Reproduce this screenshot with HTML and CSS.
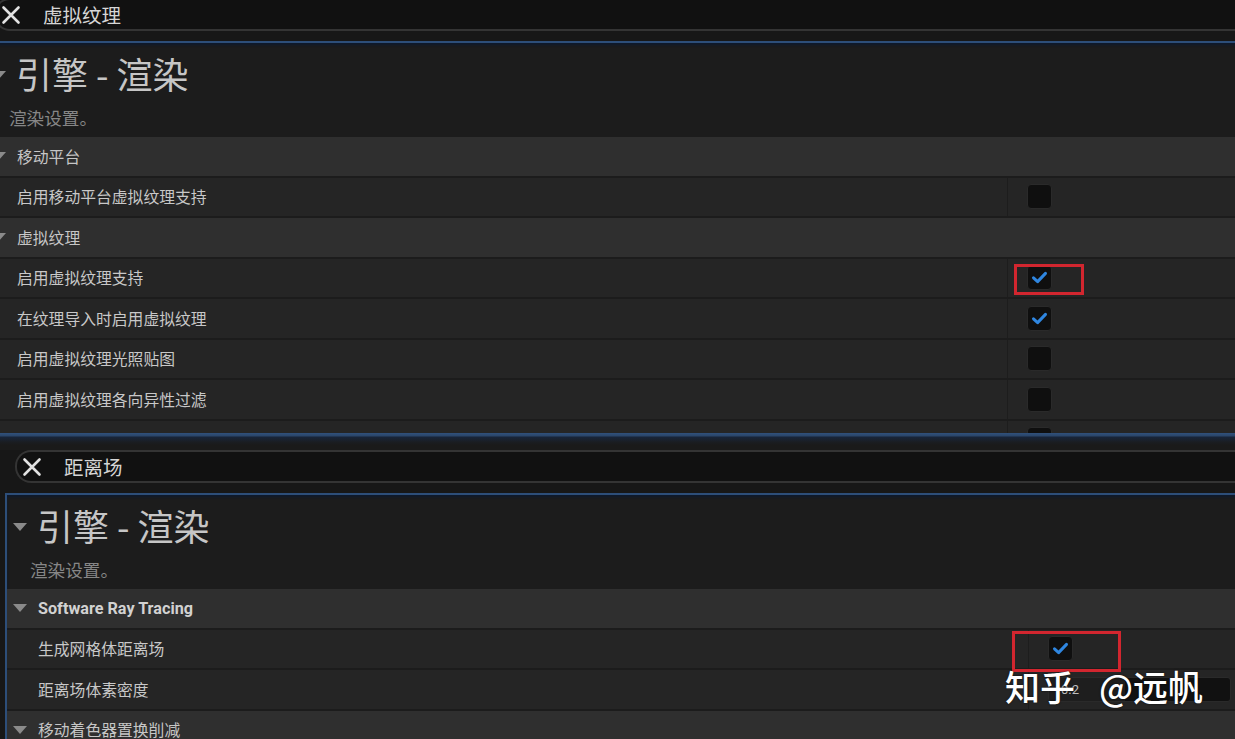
FILE: index.html
```html
<!DOCTYPE html>
<html lang="zh-CN">
<head>
<meta charset="utf-8">
<title>引擎 - 渲染</title>
<link rel="stylesheet" href="styles.css">
</head>
<body>
<div class="stage">
  <div class="clip clip-top">
    <div class="shot shot-top">
      <div class="topline"></div>
      <div class="search">
        <svg class="xicon" width="20" height="20" viewBox="0 0 20 20"><path d="M2.5 2.5 L17.5 17.5 M17.5 2.5 L2.5 17.5" stroke="#e2e2e2" stroke-width="2.6" stroke-linecap="round" fill="none"/></svg>
        <span class="search-text">虚拟纹理</span>
      </div>
      <div class="panel">
        <div class="title"><span class="tri big"></span><span>引擎 - 渲染</span></div>
        <div class="desc">渲染设置。</div>
        <div class="rows">
          <div class="row cat"><span class="tri"></span><span class="cat-label">移动平台</span></div>
          <div class="row"><div class="name">启用移动平台虚拟纹理支持</div><div class="value"><span class="cb"></span></div></div>
          <div class="row cat"><span class="tri"></span><span class="cat-label">虚拟纹理</span></div>
          <div class="row"><div class="name">启用虚拟纹理支持</div><div class="value"><span class="cb"><svg width="25" height="25" viewBox="0 0 25 25"><path d="M6.5 12.8 L10.6 16.6 L18.5 8.4" stroke="#2f86e0" stroke-width="3" stroke-linecap="round" stroke-linejoin="round" fill="none"/></svg></span></div></div>
          <div class="row"><div class="name">在纹理导入时启用虚拟纹理</div><div class="value"><span class="cb"><svg width="25" height="25" viewBox="0 0 25 25"><path d="M6.5 12.8 L10.6 16.6 L18.5 8.4" stroke="#2f86e0" stroke-width="3" stroke-linecap="round" stroke-linejoin="round" fill="none"/></svg></span></div></div>
          <div class="row"><div class="name">启用虚拟纹理光照贴图</div><div class="value"><span class="cb"></span></div></div>
          <div class="row"><div class="name">启用虚拟纹理各向异性过滤</div><div class="value"><span class="cb"></span></div></div>
          <div class="row"><div class="name"></div><div class="value"><span class="cb"></span></div></div>
        </div>
      </div>
    </div>
  </div>
  <div class="clip clip-bottom">
    <div class="shot">
      <div class="topline"></div>
      <div class="search">
        <svg class="xicon" width="20" height="20" viewBox="0 0 20 20"><path d="M2.5 2.5 L17.5 17.5 M17.5 2.5 L2.5 17.5" stroke="#e2e2e2" stroke-width="2.6" stroke-linecap="round" fill="none"/></svg>
        <span class="search-text">距离场</span>
      </div>
      <div class="panel">
        <div class="title"><span class="tri big"></span><span>引擎 - 渲染</span></div>
        <div class="desc">渲染设置。</div>
        <div class="rows">
          <div class="row cat"><span class="tri"></span><span class="cat-label bold">Software Ray Tracing</span></div>
          <div class="row"><div class="name">生成网格体距离场</div><div class="value"><span class="cb"><svg width="25" height="25" viewBox="0 0 25 25"><path d="M6.5 12.8 L10.6 16.6 L18.5 8.4" stroke="#2f86e0" stroke-width="3" stroke-linecap="round" stroke-linejoin="round" fill="none"/></svg></span></div></div>
          <div class="row"><div class="name">距离场体素密度</div><div class="value"><div class="num"><span class="num-a">0.2</span><span class="num-b"></span></div></div></div>
          <div class="row cat"><span class="tri"></span><span class="cat-label">移动着色器置换削减</span></div>
        </div>
      </div>
    </div>
  </div>
  <div class="mark mark-top"></div>
  <div class="mark mark-bottom"></div>
  <div class="watermark">知乎<span class="wm-at">@远帆</span></div>
</div>
</body>
</html>
```

FILE: styles.css
```css
* { box-sizing: border-box; }
html, body { margin: 0; padding: 0; }
body {
  width: 1235px;
  height: 739px;
  overflow: hidden;
  background: #1a1a1a;
  font-family: Roboto, "Noto Sans CJK SC", sans-serif;
  color: #c8c8c8;
}
.stage { position: relative; width: 1235px; height: 739px; }
.clip { overflow: hidden; width: 1235px; }
.clip-top { height: 433px; }
.clip-bottom { height: 306px; }
.shot {
  width: 1400px;
  background: #171717;
  display: flex;
  flex-direction: column;
}
.shot-top { margin: -19px 0 0 -21px; }
.topline {
  height: 17px;
  background: linear-gradient(#30517c 0, #2a4569 3px, #18253a 4px, #1a1d22 9px, #1a1a1a 12px);
}
.search {
  margin-left: 15px;
  height: 33px;
  border: 2px solid #343434;
  border-right: none;
  border-radius: 16px 0 0 16px;
  background: #111111;
  display: flex;
  align-items: center;
}
.xicon { margin-left: 5px; flex: none; }
.search-text {
  margin-left: 22px;
  font-size: 19.5px;
  color: #d6d6d6;
  font-family: "Noto Sans CJK SC", sans-serif;
}
.panel {
  margin: 10px 0 0 5px;
  border-top: 2px solid #2d4e79;
  border-left: 2px solid #2d4e79;
  background: #1c1c1c;
  box-shadow: inset 0 2px 3px rgba(10, 25, 50, 0.8);
  padding-bottom: 40px;
}
.title {
  margin-top: 8px;
  height: 44px;
  display: flex;
  align-items: center;
  font-size: 36px;
  color: #c6c6c6;
  font-family: "Noto Sans CJK SC", sans-serif;
  padding-left: 6px;
}
.tri {
  width: 0; height: 0;
  border-left: 7px solid transparent;
  border-right: 7px solid transparent;
  border-top: 8px solid #8a8a8a;
  flex: none;
}
.tri.big { margin-right: 10px; margin-top: 4px; }
.desc {
  margin-top: 12px;
  height: 22px;
  line-height: 22px;
  padding-left: 23px;
  font-size: 17.6px;
  color: #868686;
  font-family: "Noto Sans CJK SC", sans-serif;
}
.rows { margin-top: 6px; display: flex; flex-direction: column; }
.row {
  margin-top: 2px;
  height: 38.5px;
  background: #252525;
  display: flex;
  align-items: stretch;
  font-size: 15.8px;
  font-family: "Noto Sans CJK SC", sans-serif;
}
.row.cat {
  background: #2f2f2f;
  align-items: center;
  padding-left: 6px;
}
.cat-label { margin-left: 11px; color: #c6c6c6; }
.cat-label.bold {
  font-family: Roboto, sans-serif;
  font-weight: 700;
  font-size: 16.2px;
  color: #d2d2d2;
}
.name {
  width: 1022px;
  flex: none;
  padding-left: 31px;
  display: flex;
  align-items: center;
  border-right: 1px solid #1d1d1d;
  color: #c8c8c8;
}
.value {
  flex: 1;
  display: flex;
  align-items: center;
  padding-left: 19px;
}
.cb {
  width: 25px;
  height: 25px;
  border-radius: 4px;
  background: #0f0f0f;
  border: 1px solid #2a2a2a;
  display: block;
  position: relative;
}
.cb svg { position: absolute; left: -1px; top: -1px; }
.num {
  width: 183px;
  height: 25px;
  display: flex;
  border-radius: 4px;
  overflow: hidden;
  border: 1px solid #2a2a2a;
}
.num-a {
  width: 76px;
  background: #1e1e1e;
  color: #bdbdbd;
  font-family: Roboto, sans-serif;
  font-size: 13px;
  line-height: 23px;
  padding-left: 12px;
}
.num-b { flex: 1; background: #111111; }
.mark {
  position: absolute;
  border: 3px solid #d2262f;
}
.mark-top { left: 1014px; top: 264px; width: 70px; height: 31px; }
.mark-bottom { left: 1012px; top: 631px; width: 109px; height: 41px; }
.watermark {
  position: absolute;
  left: 1005px;
  top: 662px;
  font-size: 35px;
  line-height: 48px;
  font-weight: 500;
  color: #ffffff;
  font-family: "Noto Sans CJK SC", sans-serif;
  text-shadow: 0 0 2px rgba(0,0,0,0.8);
  white-space: nowrap;
}
.wm-at { margin-left: 24px; }
```
